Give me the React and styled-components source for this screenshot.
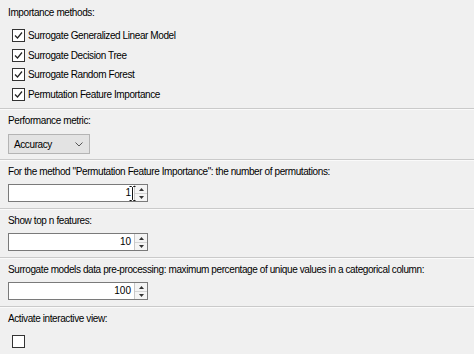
import React from "react";
import styled, { createGlobalStyle } from "styled-components";

const Global = createGlobalStyle`
  html, body {
    margin: 0;
    padding: 0;
    background: #f0f0f0;
  }
  body {
    font-family: "Liberation Sans", Arial, sans-serif;
    font-size: 10px;
    color: #000;
  }
`;

const Panel = styled.div`
  width: 474px;
  height: 354px;
  overflow: hidden;
  background: #f0f0f0;
  display: flex;
  flex-direction: column;
`;

const Section = styled.div`
  padding: ${(p) => p.$pt || 4}px 8px ${(p) => p.$pb || 6}px;
  border-bottom: 1px solid #cacaca;
  box-shadow: 0 1px 0 #fafafa;
  margin-bottom: 1px;
  &:last-child {
    border-bottom: none;
    box-shadow: none;
  }
`;

const Label = styled.div`
  line-height: 14px;
  height: 14px;
  margin-bottom: ${(p) => p.$gap || 5}px;
  letter-spacing: -0.4px;
  white-space: nowrap;
`;

const CheckList = styled.div`
  display: flex;
  flex-direction: column;
  padding-left: 4px;
`;

const CheckRow = styled.label`
  display: flex;
  align-items: center;
  height: ${(p) => p.$h || 19.6}px;
  gap: 3px;
  letter-spacing: -0.4px;
`;

const Box = styled.span`
  width: 11px;
  height: 11px;
  border: 1px solid #333;
  background: #fff;
  display: flex;
  align-items: center;
  justify-content: center;
  flex-shrink: 0;
`;

const Combo = styled.div`
  width: 82px;
  height: 20px;
  border: 1px solid #b4b4b4;
  background: #e3e3e3;
  display: flex;
  align-items: center;
  justify-content: space-between;
  padding: 0 6px 0 5px;
  box-sizing: border-box;
  letter-spacing: -0.4px;
`;

const Spinner = styled.div`
  position: relative;
  width: 140px;
  height: 18px;
  box-sizing: border-box;
  border: 1px solid #7a7a7a;
  background: #fff;
  display: flex;
  align-items: stretch;
`;

const SpinValue = styled.div`
  flex: 1;
  text-align: right;
  padding-right: 3px;
  line-height: 16px;
`;

const SpinButtons = styled.div`
  width: 12px;
  display: flex;
  flex-direction: column;
  border-left: 1px solid #c8c8c8;
  background: #f4f4f4;
`;

const SpinBtn = styled.div`
  flex: 1;
  display: flex;
  align-items: center;
  justify-content: center;
  ${(p) => (p.$top ? "border-bottom: 1px solid #d4d4d4;" : "")}
`;

const Cursor = styled.svg`
  position: absolute;
  right: 11px;
  top: 1px;
`;

const Check = ({ checked, children, h }) => (
  <CheckRow $h={h}>
    <Box>
      {checked && (
        <svg width="9" height="9" viewBox="0 0 9 9">
          <path d="M1 4.5 L3.5 7 L8 1.5" fill="none" stroke="#222" strokeWidth="1.2" />
        </svg>
      )}
    </Box>
    {children}
  </CheckRow>
);

const NumberField = ({ value, cursor }) => (
  <Spinner>
    <SpinValue>{value}</SpinValue>
    <SpinButtons>
      <SpinBtn $top>
        <svg width="5" height="3" viewBox="0 0 5 3">
          <path d="M0 3 L2.5 0 L5 3 Z" fill="#333" />
        </svg>
      </SpinBtn>
      <SpinBtn>
        <svg width="5" height="3" viewBox="0 0 5 3">
          <path d="M0 0 L2.5 3 L5 0 Z" fill="#333" />
        </svg>
      </SpinBtn>
    </SpinButtons>
    {cursor && (
      <Cursor width="7" height="15" viewBox="0 0 7 15">
        <path d="M0.5 0.5 H2.5 L3.5 1.5 L4.5 0.5 H6.5 M3.5 1.5 V13.5 M0.5 14.5 H2.5 L3.5 13.5 L4.5 14.5 H6.5" fill="none" stroke="#111" strokeWidth="1" />
      </Cursor>
    )}
  </Spinner>
);

export default function App() {
  return (
    <>
      <Global />
      <Panel>
        <Section $pt={6} $pb={4}>
          <Label $gap={6}>Importance methods:</Label>
          <CheckList>
            <Check checked>Surrogate Generalized Linear Model</Check>
            <Check checked>Surrogate Decision Tree</Check>
            <Check checked>Surrogate Random Forest</Check>
            <Check checked>Permutation Feature Importance</Check>
          </CheckList>
        </Section>
        <Section $pb={5}>
          <Label $gap={6}>Performance metric:</Label>
          <Combo>
            <span>Accuracy</span>
            <svg width="8" height="5" viewBox="0 0 8 5">
              <path d="M0.5 0.5 L4 4 L7.5 0.5" fill="none" stroke="#555" strokeWidth="1" />
            </svg>
          </Combo>
        </Section>
        <Section>
          <Label>For the method "Permutation Feature Importance": the number of permutations:</Label>
          <NumberField value="1" cursor />
        </Section>
        <Section>
          <Label>Show top n features:</Label>
          <NumberField value="10" />
        </Section>
        <Section>
          <Label>Surrogate models data pre-processing: maximum percentage of unique values in a categorical column:</Label>
          <NumberField value="100" />
        </Section>
        <Section>
          <Label>Activate interactive view:</Label>
          <CheckList>
            <Check h={20} />
          </CheckList>
        </Section>
      </Panel>
    </>
  );
}
